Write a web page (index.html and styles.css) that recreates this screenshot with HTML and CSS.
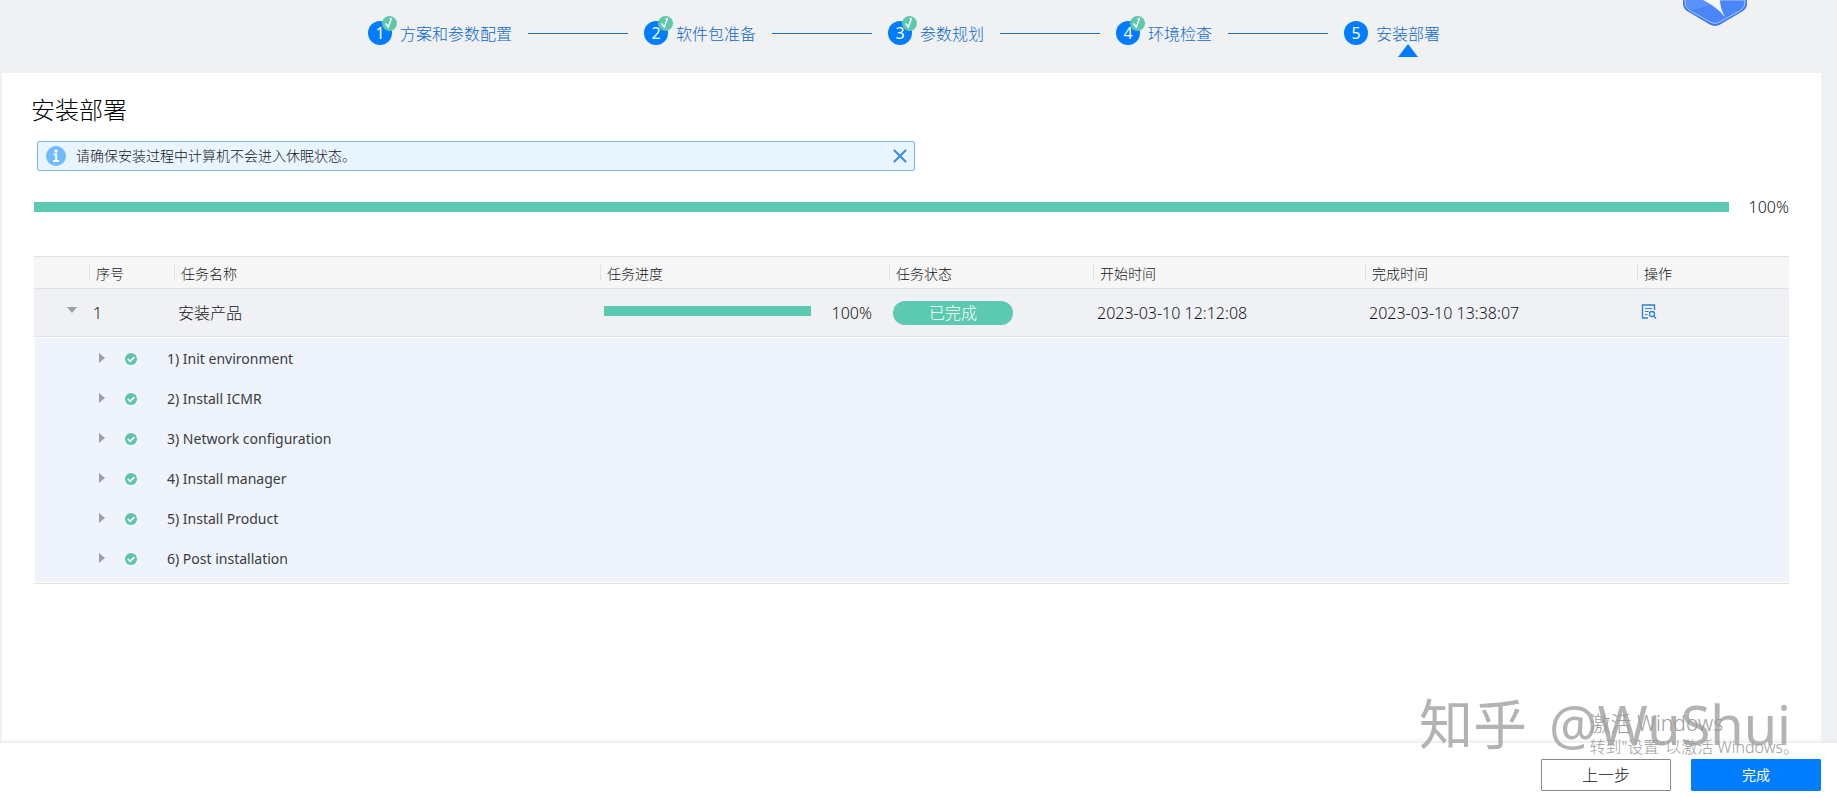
FILE: index.html
```html
<!DOCTYPE html>
<html lang="zh-CN">
<head>
<meta charset="utf-8">
<title>安装部署</title>
<meta name="viewport" content="width=device-width, initial-scale=1">
<link rel="stylesheet" href="styles.css">
</head>
<body>
<svg class="sprite" width="0" height="0" aria-hidden="true">
  <symbol id="badge" viewBox="0 0 15 15"><circle cx="7.500" cy="7.500" r="7.500" fill="#5fc7ab"/><path d="M3.500 7.500 6.300 11 9.300 3H7.500" fill="none" stroke="#fff" stroke-width="1.400"/></symbol>
  <symbol id="done" viewBox="0 0 12 12"><circle cx="6" cy="6" r="6" fill="#5ec5aa"/><path d="M2.800 6 5.200 8.300 9.300 4.200" fill="none" stroke="#fff" stroke-width="1.700"/></symbol>
  <symbol id="right" viewBox="0 0 6 10"><path d="M0 0 6 5 0 10Z" fill="#9b9fa8"/></symbol>
</svg>
<header class="top">
  <ol class="steps">
    <li class="step"><span class="num">1<svg class="badge"><use href="#badge"/></svg></span><span class="step-name">方案和参数配置</span></li>
    <li class="step"><span class="num">2<svg class="badge"><use href="#badge"/></svg></span><span class="step-name">软件包准备</span></li>
    <li class="step"><span class="num">3<svg class="badge"><use href="#badge"/></svg></span><span class="step-name">参数规划</span></li>
    <li class="step"><span class="num">4<svg class="badge"><use href="#badge"/></svg></span><span class="step-name">环境检查</span></li>
    <li class="step current" aria-current="step"><span class="num">5</span><span class="step-name">安装部署</span></li>
  </ol>
  <svg class="logo" viewBox="0 0 64 27" aria-hidden="true">
    <path d="M0 0H64V4Q64 8 60 11L38 24Q32 28 26 24L4 11Q0 8 0 4Z" fill="#3f78e8"/>
    <path d="M2 0H62V3Q62 7 58 10L37 22Q32 25 27 22L6 10Q2 7 2 3Z" fill="#4a86fa" stroke="#a9c8ff" stroke-width="1"/>
    <path d="M3 0H20L28 5 8 10 3 6Z" fill="#5c93fb"/>
    <path d="M20 0H37Q37 8 42 17 34 7 20 0Z" fill="#f3f7ff"/>
  </svg>
</header>
<main class="panel">
  <h1 class="title">安装部署</h1>
  <div class="notice" role="status">
    <svg class="info" viewBox="0 0 20 20" aria-hidden="true"><circle cx="10" cy="10" r="10" fill="#6cbcff"/><circle cx="10" cy="5" r="1.700" fill="#fff"/><path d="M7.500 8.500H10.200V15M7.300 15H13" fill="none" stroke="#fff" stroke-width="2"/></svg>
    <span class="notice-text">请确保安装过程中计算机不会进入休眠状态。</span>
    <button class="close" type="button" aria-label="关闭"><svg viewBox="0 0 14 14"><path d="M1.500 1.500 12.500 12.500M12.500 1.500 1.500 12.500" stroke="#3f8fe6" stroke-width="2.200" stroke-linecap="round"/></svg></button>
  </div>
  <div class="total">
    <div class="bar"><div class="fill" style="width:100%"></div></div>
    <span class="percent">100%</span>
  </div>
  <table class="tasks">
    <colgroup><col class="c-toggle"><col class="c-no"><col><col class="c-progress"><col class="c-state"><col class="c-time"><col class="c-time"><col class="c-action"></colgroup>
    <thead>
      <tr><th></th><th><span class="head">序号</span></th><th><span class="head">任务名称</span></th><th><span class="head">任务进度</span></th><th><span class="head">任务状态</span></th><th><span class="head">开始时间</span></th><th><span class="head">完成时间</span></th><th><span class="head">操作</span></th></tr>
    </thead>
    <tbody>
      <tr class="task">
        <td><button class="toggle" type="button" aria-label="收起" aria-expanded="true"><svg viewBox="0 0 10 6"><path d="M0 0H10L5 6Z" fill="#9b9fa8"/></svg></button></td>
        <td>1</td>
        <td>安装产品</td>
        <td><div class="cell-progress"><div class="bar"><div class="fill" style="width:100%"></div></div><span>100%</span></div></td>
        <td><span class="state">已完成</span></td>
        <td>2023-03-10 12:12:08</td>
        <td>2023-03-10 13:38:07</td>
        <td><button class="detail" type="button" aria-label="查看详情"><svg viewBox="0 0 16 15" fill="none" stroke="#2b82d4"><path d="M13.500 6V1H1.500V14H7" stroke-width="1.400"/><path d="M4 4.500H11M4 7.500H7.500M4 10.500H6.500" stroke-width="1"/><circle cx="11" cy="10" r="2.500" stroke-width="1.300"/><path d="M12.700 12 15 14.500" stroke-width="1.400"/></svg></button></td>
      </tr>
      <tr>
        <td class="sub-cell" colspan="8">
          <ul class="subs">
            <li class="sub"><button class="expand" type="button" aria-label="展开"><svg><use href="#right"/></svg></button><svg class="ok"><use href="#done"/></svg><span>1) Init environment</span></li>
            <li class="sub"><button class="expand" type="button" aria-label="展开"><svg><use href="#right"/></svg></button><svg class="ok"><use href="#done"/></svg><span>2) Install ICMR</span></li>
            <li class="sub"><button class="expand" type="button" aria-label="展开"><svg><use href="#right"/></svg></button><svg class="ok"><use href="#done"/></svg><span>3) Network configuration</span></li>
            <li class="sub"><button class="expand" type="button" aria-label="展开"><svg><use href="#right"/></svg></button><svg class="ok"><use href="#done"/></svg><span>4) Install manager</span></li>
            <li class="sub"><button class="expand" type="button" aria-label="展开"><svg><use href="#right"/></svg></button><svg class="ok"><use href="#done"/></svg><span>5) Install Product</span></li>
            <li class="sub"><button class="expand" type="button" aria-label="展开"><svg><use href="#right"/></svg></button><svg class="ok"><use href="#done"/></svg><span>6) Post installation</span></li>
          </ul>
        </td>
      </tr>
    </tbody>
  </table>
</main>
<footer class="actions">
  <button class="btn" type="button">上一步</button>
  <button class="btn primary" type="button">完成</button>
</footer>
<div class="watermark"><span>知乎</span><span>@WuShui</span></div>
<div class="activate">
  <div class="activate-title">激活 Windows</div>
  <div>转到"设置"以激活 Windows。</div>
</div>
</body>
</html>
```
FILE: styles.css
```css
* { box-sizing: border-box; }
body {
  margin: 0;
  min-height: 100vh;
  display: flex;
  flex-direction: column;
  position: relative;
  background: #f0f1f3;
  color: #15161a;
  font: 300 16px/24px "Noto Sans", "Noto Sans CJK SC", sans-serif;
}
button {
  font: inherit;
  color: inherit;
  padding: 0;
  border: 0;
  background: none;
  cursor: pointer;
}
svg { display: block; }
.sprite { position: absolute; }

.top {
  position: relative;
  height: 73px;
  padding: 21px 29px 0 0;
}
.steps {
  display: flex;
  justify-content: center;
  margin: 0;
  padding: 0;
  list-style: none;
}
.step {
  display: flex;
  align-items: center;
  color: #0f68c8;
}
.step + .step::before {
  content: "";
  width: 100px;
  height: 1px;
  margin: 0 16px;
  background: #1a70c4;
}
.num {
  position: relative;
  width: 24px;
  height: 24px;
  margin-right: 8px;
  border-radius: 50%;
  background: #007dff;
  color: #fff;
  font-weight: 400;
  text-align: center;
}
.badge {
  position: absolute;
  top: -5px;
  right: -5px;
  width: 15px;
  height: 15px;
}
.step-name { position: relative; line-height: 26px; margin-bottom: -2px; }
.current .step-name::after {
  content: "";
  position: absolute;
  top: 23px;
  left: 50%;
  margin-left: -10px;
  border: solid transparent;
  border-width: 0 10px 13px;
  border-bottom-color: #007dff;
}
.logo {
  position: absolute;
  top: 0;
  right: 90px;
  width: 64px;
  height: 27px;
}

.panel {
  flex: 1;
  margin: 0 16px 0 2px;
  padding: 21px 32px 0;
  background: #fff;
}
.title {
  margin: 0 0 15px -3px;
  color: #000;
  font-size: 24px;
  font-weight: 300;
  line-height: 32px;
}
.notice {
  display: flex;
  align-items: center;
  width: 50%;
  height: 30px;
  margin-left: 3px;
  padding: 0 7px 0 8px;
  border: 1px solid #80b9d8;
  border-radius: 2px;
  background: #e9f5fe;
  font-size: 14px;
}
.info { width: 20px; height: 20px; }
.notice-text { flex: 1; margin-left: 10px; }
.close svg { width: 14px; height: 14px; }
.bar { flex: 1; height: 10px; background: #e4e6ea; }
.fill { height: 100%; background: #5ccab0; }
.total {
  display: flex;
  align-items: center;
  gap: 20px;
  margin: 24px 0 37px;
}

.tasks {
  width: 100%;
  border-collapse: separate;
  border-spacing: 0;
  table-layout: fixed;
}
.c-toggle { width: 55px; }
.c-no { width: 85px; }
.c-progress { width: 289px; }
.c-state { width: 204px; }
.c-time { width: 272px; }
.c-action { width: 152px; }
.tasks th {
  height: 33px;
  padding: 0;
  border: solid #dfe1e4;
  border-width: 1px 0;
  background: #f6f6f6;
  font-size: 14px;
  font-weight: 300;
  text-align: left;
}
.head {
  display: block;
  height: 16px;
  padding-left: 6px;
  border-left: 1px solid #dfe1e4;
  line-height: 18px;
}
.task td {
  height: 48px;
  padding: 0 0 0 4px;
  border-bottom: 1px solid #dfe1e4;
  background: #f0f1f4;
}
.toggle { display: block; margin-left: 29px; padding-bottom: 6px; }
.toggle svg { width: 10px; height: 6px; }
.cell-progress {
  display: flex;
  align-items: center;
  gap: 21px;
  padding-right: 17px;
}
.cell-progress .bar { margin-bottom: 4px; }
.state {
  display: block;
  width: 120px;
  border-radius: 12px;
  background: #5ccab0;
  color: #fff;
  text-align: center;
}
.detail svg { width: 16px; height: 15px; }
.sub-cell {
  padding: 1px 0;
  border-bottom: 1px solid #dce4e0;
}
.subs {
  margin: 0 0 0 1px;
  padding: 1px 0 3px;
  background: #eff3fb;
  list-style: none;
}
.sub {
  display: flex;
  align-items: center;
  height: 40px;
  padding-left: 64px;
  color: #3a3c42;
  font-size: 14px;
  font-weight: 400;
}
.expand { padding-bottom: 2px; }
.expand svg { width: 6px; height: 10px; }
.ok { width: 12px; height: 12px; margin: 0 30px 0 20px; }

.actions {
  display: flex;
  justify-content: flex-end;
  gap: 20px;
  padding: 16px 16px 7px;
  background: #fff;
  box-shadow: 0 -1px 5px #e2e2e4;
}
.btn {
  width: 130px;
  height: 32px;
  border: 1px solid #888;
  border-radius: 1px;
  background: #fff;
  color: #111;
}
.primary {
  border-color: #007dff;
  background: #007dff;
  color: #fff;
  font-size: 14px;
  font-weight: 400;
}
.watermark {
  position: absolute;
  right: 46px;
  bottom: 42px;
  display: flex;
  gap: 22px;
  color: #b3b3b3;
  font-size: 54px;
  font-weight: 400;
  line-height: 64px;
  pointer-events: none;
}
.activate {
  position: absolute;
  right: 38px;
  bottom: 39px;
  color: #9c9c9c;
  pointer-events: none;
}
.activate-title { font-size: 21px; }
```
